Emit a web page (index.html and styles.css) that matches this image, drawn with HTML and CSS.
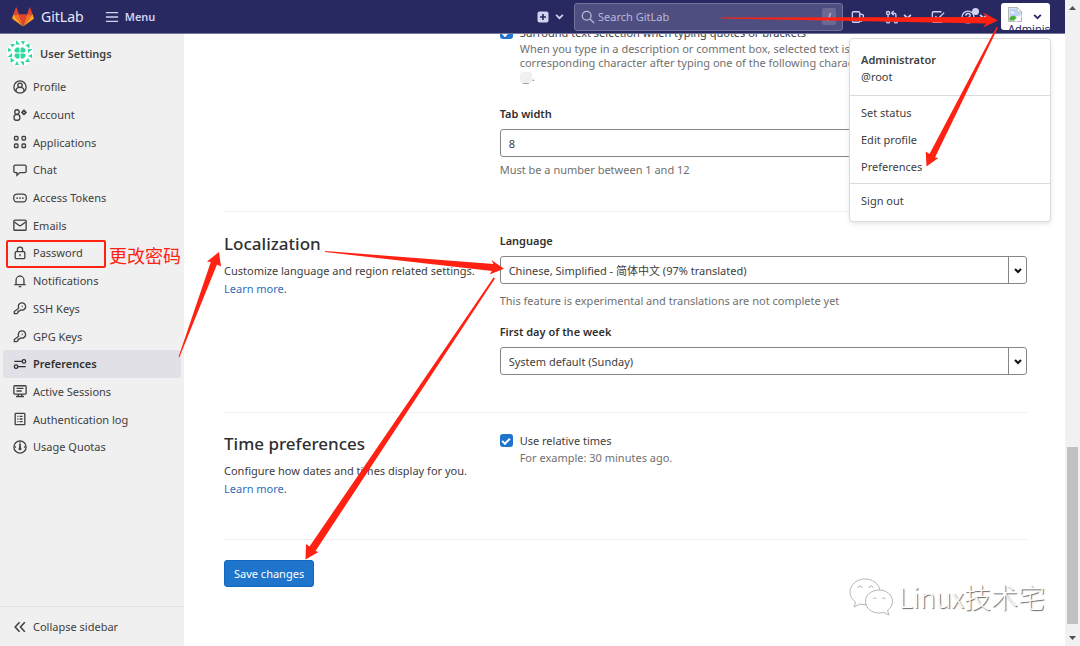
FILE: index.html
```
<!DOCTYPE html>
<html lang="en">

<head>
    <meta charset="UTF-8">
    <meta name="viewport" content="width=device-width, initial-scale=1">
    <title>Preferences · User Settings · GitLab</title>
    <link rel="stylesheet" href="styles.css">
</head>

<body>
    <div class="page">
        <header class="navbar">
            <a href="#" class="brand">
                <svg class="logo" viewBox="0 0 24 22">
                    <path fill="#e24329" d="M12 21.5 16.4 8H7.6z" />
                    <path fill="#fc6d26" d="M12 21.5 7.6 8H1.4zM12 21.5 16.4 8h6.2z" />
                    <path fill="#fca326" d="M1.4 8 .1 12.1c-.1.4 0 .8.3 1L12 21.5zM22.6 8l1.3 4.1c.1.4 0 .8-.3 1L12 21.5z" />
                    <path fill="#e24329" d="M1.4 8h6.2L4.9.7c-.1-.4-.7-.4-.8 0zM22.6 8h-6.2L19.1.7c.1-.4.7-.4.8 0z" />
                </svg>
                GitLab
            </a>
            <button type="button" class="nav-button menu-toggle">
                <svg class="icon" viewBox="0 0 16 16"><path d="M1 3h14M1 8h14M1 13h14" /></svg>
                Menu
            </button>
            <button type="button" class="nav-button new-button" aria-label="Create new">
                <svg class="icon-small" viewBox="0 0 12 12"><rect x=".5" y=".5" width="11" height="11" rx="2" fill="currentColor" stroke="none" /><path stroke="#292961" stroke-width="1.6" d="M6 3v6M3 6h6" /></svg>
                <svg class="chevron" viewBox="0 0 8 8"><path d="m1 2.5 3 3 3-3" /></svg>
            </button>
            <div class="search">
                <svg class="icon" viewBox="0 0 16 16"><circle cx="6.5" cy="6.5" r="5" /><path d="m10.5 10.5 4.5 4.5" /></svg>
                <input type="text" placeholder="Search GitLab" aria-label="Search GitLab">
                <kbd>/</kbd>
            </div>
            <nav class="nav-icons">
                <a href="#" aria-label="Issues">
                    <svg class="icon" viewBox="0 0 16 16"><rect x="1.5" y="2" width="8.5" height="12" rx="1.5" /><path d="m10 4.5 3.2.8c.8.2 1.2.9 1 1.7l-1.1 4.6c-.2.8-.9 1.2-1.7 1H10" /></svg>
                </a>
                <a href="#" class="with-chevron" aria-label="Merge requests">
                    <svg class="icon" viewBox="0 0 16 16"><circle cx="3.5" cy="3.5" r="1.8" /><circle cx="3.5" cy="13" r="1.8" /><circle cx="12.5" cy="13" r="1.8" /><path d="M3.5 5.3v5.9M12.5 11.2V6c0-1.7-1-2.5-2.5-2.5H8M10 1 7.5 3.5 10 6" /></svg>
                    <svg class="chevron" viewBox="0 0 8 8"><path d="m1 2.5 3 3 3-3" /></svg>
                </a>
                <a href="#" aria-label="To-Do List">
                    <svg class="icon" viewBox="0 0 16 16"><path d="M12 2H3a1.5 1.5 0 0 0-1.5 1.5v9A1.5 1.5 0 0 0 3 14h9a1.5 1.5 0 0 0 1.5-1.5V9M5 7l3 3 7-7" /></svg>
                </a>
                <a href="#" class="with-chevron help-link" aria-label="Help">
                    <svg class="icon" viewBox="0 0 16 16"><circle cx="8" cy="8" r="6.8" /><path d="M5.5 6.5C5.5 5 6.6 4 8 4s2.5.9 2.5 2.2C10.5 8 8 8 8 9.800M8 11v1.500" /></svg>
                    <svg class="chevron" viewBox="0 0 8 8"><path d="m1 2.500 3 3 3-3" /></svg>
                    <span class="dot"></span>
                </a>
            </nav>
            <button type="button" class="user-button">
                <span class="avatar">
                    <svg class="broken-image" viewBox="0 0 14 15">
                        <path fill="#eef3fc" stroke="#a5a5a5" stroke-width=".8" d="M.5.5H9L13.500 5v9.500H.5z" />
                        <path fill="#bdd3f8" d="M1.500 1.500H8.500V5.500h4v3L9 9l-7.500 3z" />
                        <path fill="#fff" d="M2.800 5.800c0-1.300 1.700-2 2.700-.8 1 0 1.500.6 1 1.300H3z" />
                        <path fill="#4caf3a" d="M1.500 13.500V11c2-3 5-3 7-.5L6 13.500z" />
                        <path fill="#fff" d="M6.500 14.500 13.500 8v2L9 14.500z" />
                        <path fill="#fff" stroke="#a5a5a5" stroke-width=".7" d="M9 .5V5h4.500z" />
                    </svg>
                    Administrator
                </span>
                <svg class="chevron" viewBox="0 0 8 8"><path d="m1 2.500 3 3 3-3" /></svg>
            </button>

            <div class="user-menu">
                <div class="user-info"><strong>Administrator</strong><span>@root</span></div>
                <div class="menu-group">
                    <a href="#">Set status</a>
                    <a href="#">Edit profile</a>
                    <a href="#">Preferences</a>
                </div>
                <div class="menu-group">
                    <a href="#">Sign out</a>
                </div>
            </div>
        </header>

        <div class="layout">
            <aside class="sidebar">
                <a href="#" class="context">
                    <svg class="identicon" viewBox="0 0 26 26">
                        <defs><clipPath id="round"><circle cx="13" cy="13" r="13" /></clipPath></defs>
                        <g clip-path="url(#round)">
                            <path fill="#fff" d="M0 0h26v26H0z" />
                            <path fill="#2fd8a0" d="M7.500 9.500l2-2h2.500l.5 1.500v3.500h-3.500l-1.500-1zM18.500 9.500l-2-2H14l-.5 1.500v3.500H17l1.500-1zM7.500 16.500l2 2h2.500l.5-1.500v-3.500H9l-1.500 1zM18.500 16.500l-2 2H14l-.5-1.500v-3.500H17l1.500 1zM3 4h5L5.500 7.500zM9 0l4 4.500H9zM14 1h4l-2 4zM22.500 3v5.500l-4-3zM25.500 9 21 13V9zM25 14v4l-4-2zM23 22h-5l3-4zM17 26l-4-4.500h4zM12 25H8l2-4zM3.500 23v-5.500l4 3zM.5 17 5 13v4zM1 12V8l4 2z" />
                        </g>
                    </svg>
                    User Settings
                </a>
                <ul class="side-nav">
                    <li><a href="#"><svg class="icon" viewBox="0 0 16 16"><circle cx="8" cy="8" r="7" /><circle cx="8" cy="6" r="2.500" /><path d="M3.500 13v-1c0-2 2-3.500 4.500-3.500s4.500 1.500 4.500 3.500v1" /></svg>Profile</a></li>
                    <li><a href="#"><svg class="icon" viewBox="0 0 16 16"><circle cx="4.500" cy="4.500" r="2.500" /><rect x="1.200" y="7.500" width="6.600" height="6.500" rx="2.500" /><circle cx="12.500" cy="5" r="1.700" stroke-width="2" /><path d="M12.500 1.800v1M12.500 7.200v1M9.300 5h1M14.700 5h1" /></svg>Account</a></li>
                    <li><a href="#"><svg class="icon" viewBox="0 0 16 16"><rect x="1.700" y="1.700" width="4" height="4" rx="1" /><rect x="10.300" y="1.700" width="4" height="4" rx="1" /><rect x="1.700" y="10.300" width="4" height="4" rx="1" /><rect x="10.300" y="10.300" width="4" height="4" rx="1" /></svg>Applications</a></li>
                    <li><a href="#"><svg class="icon" viewBox="0 0 16 16"><path d="M2.500 2.500h11c.8 0 1.500.7 1.500 1.500v5.500c0 .8-.7 1.500-1.500 1.500H8l-3.500 3V11h-2C1.700 11 1 10.300 1 9.500V4c0-.8.7-1.500 1.500-1.500z" /></svg>Chat</a></li>
                    <li><a href="#"><svg class="icon" viewBox="0 0 16 16"><rect x=".8" y="3.500" width="14.400" height="9" rx="4" /><path stroke-width="2" d="M4 8h1.500M7.200 8h1.500M10.500 8H12" /></svg>Access Tokens</a></li>
                    <li><a href="#"><svg class="icon" viewBox="0 0 16 16"><rect x="1" y="2.500" width="14" height="11.500" rx="1" /><path d="m1.500 4.500 5.500 4c.7.500 1.300.5 2 0l5.500-4" /></svg>Emails</a></li>
                    <li><a href="#"><svg class="icon" viewBox="0 0 16 16"><rect x="2.500" y="6.500" width="11" height="8" rx="1.200" /><path d="M5 6.500V4.200a3 3 0 0 1 6 0v2.300M8 9.200v2.600" /></svg>Password</a></li>
                    <li><a href="#"><svg class="icon" viewBox="0 0 16 16"><path d="M8 1.500v1M3.500 12V7a4.500 4.500 0 0 1 9 0v5M1.500 12.200h13M6.500 14.500h3" /></svg>Notifications</a></li>
                    <li><a href="#"><svg class="icon" viewBox="0 0 16 16"><path d="M6.500 8.200a4.200 4.200 0 1 1 2.200 2L7.200 11.500H5.800V13l-1.500 1.500H1.500V12z" /><path d="M10 6h1" stroke-width="2" /></svg>SSH Keys</a></li>
                    <li><a href="#"><svg class="icon" viewBox="0 0 16 16"><path d="M6.500 8.200a4.200 4.200 0 1 1 2.200 2L7.200 11.500H5.800V13l-1.500 1.500H1.500V12z" /><path d="M10 6h1" stroke-width="2" /></svg>GPG Keys</a></li>
                    <li><a href="#" class="active"><svg class="icon" viewBox="0 0 16 16"><circle cx="12.500" cy="5" r="2" /><circle cx="3.500" cy="11" r="2" /><path d="M1.500 5h9M5.500 11h9" /></svg>Preferences</a></li>
                    <li><a href="#"><svg class="icon" viewBox="0 0 16 16"><rect x="1" y="2" width="14" height="9.500" rx="1" /><path d="M4 5h8M4 8h6M6 11.500v2.500M10 11.500v2.500M3.500 14.300h9" /></svg>Active Sessions</a></li>
                    <li><a href="#"><svg class="icon" viewBox="0 0 16 16"><rect x="2.500" y="1.500" width="11" height="13" rx=".5" /><path d="M5 5h1.200M7.500 5H11M5 8h1.200M7.500 8H11M5 11h1.200M7.500 11H11" /></svg>Authentication log</a></li>
                    <li><a href="#"><svg class="icon" viewBox="0 0 16 16"><circle cx="8" cy="8" r="7" /><path stroke-width="2" d="M8 4v6" /><circle cx="8" cy="10" r="1" /><path d="M2 8h1.500M12.500 8H14M8 1.500V3" /></svg>Usage Quotas</a></li>
                </ul>
                <button type="button" class="collapse">
                    <svg class="icon" viewBox="0 0 16 16"><path stroke-width="1.800" d="M7.500 2.500 2.500 8l5 5.500M13.500 2.500 8.500 8l5 5.500" /></svg>
                    Collapse sidebar
                </button>
            </aside>

            <main>
                <form>
                    <section class="section scrolled">
                        <div class="fields">
                            <div class="check">
                                <input type="checkbox" id="surround" checked>
                                <label for="surround">Surround text selection when typing quotes or brackets</label>
                                <p class="help tight">When you type in a description or comment box, selected text is surrounded by the<br>corresponding character after typing one of the following characters:<br><code>_</code>.</p>
                            </div>
                            <div class="field tab-width">
                                <label for="tab-width">Tab width</label>
                                <input type="text" id="tab-width" value="8">
                                <p class="help">Must be a number between 1 and 12</p>
                            </div>
                        </div>
                    </section>

                    <section class="section localization">
                        <div class="intro">
                            <h2>Localization</h2>
                            <p>Customize language and region related settings.<br><a href="#">Learn more</a>.</p>
                        </div>
                        <div class="fields">
                            <div class="field">
                                <label for="language">Language</label>
                                <div class="select">
                                    <select id="language">
                                        <option>Chinese, Simplified - 简体中文 (97% translated)</option>
                                    </select>
                                    <svg viewBox="0 0 18 28"><path d="m6 13 3 3 3-3" /></svg>
                                </div>
                                <p class="help">This feature is experimental and translations are not complete yet</p>
                            </div>
                            <div class="field">
                                <label for="first-day">First day of the week</label>
                                <div class="select">
                                    <select id="first-day">
                                        <option>System default (Sunday)</option>
                                    </select>
                                    <svg viewBox="0 0 18 28"><path d="m6 13 3 3 3-3" /></svg>
                                </div>
                            </div>
                        </div>
                    </section>

                    <section class="section time">
                        <div class="intro">
                            <h2>Time preferences</h2>
                            <p>Configure how dates and times display for you.<br><a href="#">Learn more</a>.</p>
                        </div>
                        <div class="fields">
                            <div class="check">
                                <input type="checkbox" id="relative" checked>
                                <label for="relative">Use relative times</label>
                                <p class="help">For example: 30 minutes ago.</p>
                            </div>
                        </div>
                    </section>

                    <button type="submit" class="save">Save changes</button>
                </form>
            </main>
        </div>
    </div>

    <div class="scrollbar" aria-hidden="true">
        <svg viewBox="0 0 15 16"><path d="M4 10h7L7.500 6z" /></svg>
        <div class="thumb"></div>
        <svg viewBox="0 0 15 16"><path d="M4 6h7l-3.500 4z" /></svg>
    </div>

    <!-- tutorial marks drawn over the page -->
    <svg class="annotations" width="1080" height="646" viewBox="0 0 1080 646">
        <path d="M721 17.500 986 17 983 12.500 998 20.500 983 27.500 986 23.500 721 18.500z" />
        <path d="M996.500 27 929.500 154 925.700 151.500 926.500 166.500 938.300 158 935 157.500 998 27.500z" />
        <path d="M178.500 357 210.800 262 207 261.500 219 252 221 266.500 217 264.500 179.500 357z" />
        <path d="M325 251 493.500 264 491.500 260 504 268.700 489.500 274.500 492 271 325 252z" />
        <path d="M493.500 277.500 309.500 546.500 306 544 305.500 559.500 318.500 552 315.500 551 495 278.500z" />
        <rect x="7" y="241" width="98" height="26" rx="1" />
        <text x="109" y="263">更改密码</text>
    </svg>

    <div class="watermark">
        <svg viewBox="0 0 44 38">
            <path d="M16 1C7.500 1 1 7 1 14c0 4 2 7.500 5.500 10L5 29l6-3c2 .6 4 .8 6 .700" />
            <path d="M30 12c-7.500 0-13.500 5-13.500 11.500S22.500 35 30 35c1.500 0 3-.2 4.500-.7L40 37l-1.500-4.500c3-2 5-5.500 5-9C43.500 17 37.500 12 30 12zM31 12C29.500 5.500 23.500 1 16 1" />
            <path d="M9 10a2 2 0 0 1 4 0M20 10a2 2 0 0 1 4 0M24 21a2 2 0 0 1 3.500 0M33 21a2 2 0 0 1 3.500 0" />
        </svg>
        Linux技术宅
    </div>
</body>

</html>
```

FILE: styles.css
```
:root {
    --indigo: #292961;
    --indigo-text: #d1d1f0;
    --text: #404040;
    --text-strong: #303030;
    --text-muted: #707070;
    --border: #868686;
    --line: #eee;
    --blue: #1f75cb;
    --link: #2f6fbf;
    --mark: #ff2213;
    --font: "Noto Sans", "Noto Sans CJK SC", sans-serif;
}

* {
    box-sizing: border-box;
}

body {
    margin: 0;
    height: 100vh;
    display: flex;
    overflow: hidden;
    background: #fff;
    color: var(--text);
    font: 11px/17px var(--font);
}

a {
    color: inherit;
    text-decoration: none;
}

p,
h2,
ul {
    margin: 0;
    padding: 0;
}

button,
input,
select {
    font: inherit;
    color: inherit;
}

svg {
    flex: none;
    fill: none;
    stroke: currentColor;
}

.icon {
    width: 14px;
    height: 14px;
    stroke-width: 1.5;
}

.icon-small {
    width: 12px;
    height: 12px;
}

.chevron {
    width: 9px;
    height: 9px;
    stroke-width: 1.5;
}

.page {
    flex: 1;
    min-width: 0;
    display: flex;
    flex-direction: column;
}

/* Top bar */
.navbar {
    position: relative;
    z-index: 2;
    flex: none;
    height: 34px;
    padding: 0 15px 0 12px;
    display: flex;
    align-items: center;
    background: var(--indigo);
    border-bottom: 1px solid #77779c;
    color: var(--indigo-text);
}

.brand {
    display: flex;
    align-items: center;
    gap: 7px;
    font-size: 14px;
    color: #e8e8f7;
}

.logo {
    width: 22px;
    height: 20px;
    stroke: none;
}

.nav-button {
    display: flex;
    align-items: center;
    gap: 6px;
    padding: 0;
    border: 0;
    background: none;
}

.menu-toggle {
    margin-left: 21px;
    font-weight: 600;
}

.new-button {
    margin-left: auto;
    margin-right: 10px;
}

.search {
    flex: 0 1 269px;
    height: 28px;
    display: flex;
    align-items: center;
    gap: 3px;
    padding: 0 6px;
    background: #4f4e80;
    border: 1px solid #74739b;
    border-radius: 3px;
}

.search .icon {
    color: #b9b9d9;
}

.search input {
    flex: 1;
    min-width: 0;
    padding: 0;
    border: 0;
    background: none;
}

.search input::placeholder {
    color: #b9b9d9;
    opacity: 1;
}

.search kbd {
    width: 14px;
    border-radius: 2px;
    background: #696994;
    font: inherit;
    text-align: center;
}

.nav-icons {
    display: flex;
    gap: 20px;
    margin: 0 13px 0 8px;
}

.nav-icons a {
    display: flex;
    align-items: center;
}

.with-chevron {
    position: relative;
    gap: 4px;
}

.with-chevron + a {
    margin-left: -1px;
}

.help-link {
    margin-left: -4px;
}

.dot {
    position: absolute;
    top: -2px;
    left: 11px;
    width: 7px;
    height: 7px;
    border-radius: 50%;
    background: var(--indigo-text);
}

.user-button {
    width: 49px;
    height: 27px;
    display: flex;
    align-items: flex-start;
    gap: 5px;
    padding: 4px 7px 0;
    overflow: hidden;
    border: 0;
    border-radius: 3px;
    background: #fff;
    color: var(--indigo);
}

.user-button .chevron {
    margin-top: 5px;
}

.avatar {
    flex: none;
    width: 20px;
    line-height: 12px;
    text-align: left;
}

.broken-image {
    display: block;
    width: 14px;
    height: 15px;
    margin-bottom: 1px;
    stroke: none;
}

.user-menu {
    position: absolute;
    top: 38px;
    right: 14px;
    width: 202px;
    padding-bottom: 4px;
    border: 1px solid #dbdbdb;
    border-radius: 4px;
    background: #fff;
    color: var(--text);
    box-shadow: 0 2px 4px rgba(0, 0, 0, 0.1);
}

.user-info {
    display: flex;
    flex-direction: column;
    padding: 12px 11px 10px;
}

.user-info strong {
    font-weight: 600;
}

.menu-group {
    padding: 3px 0;
    border-top: 1px solid #dbdbdb;
}

.menu-group a {
    display: block;
    padding: 5px 11px;
}

.layout {
    flex: 1;
    min-height: 0;
    display: flex;
}

/* Sidebar */
.sidebar {
    flex: none;
    width: 184px;
    display: flex;
    flex-direction: column;
    background: #f0f0f0;
}

.context {
    display: flex;
    align-items: center;
    gap: 7px;
    padding: 6px 7px 7px;
    font-weight: 600;
}

.identicon {
    width: 26px;
    height: 26px;
    stroke: none;
}

.side-nav {
    height: 60vh;
    min-height: 336px;
    display: grid;
    grid-auto-rows: 1fr;
    list-style: none;
    padding: 0 3px;
}

.side-nav a {
    height: 100%;
    display: flex;
    align-items: center;
    gap: 6px;
    padding: 0 10px;
    border-radius: 3px;
}

.side-nav .active {
    background: #e1e0e6;
    color: var(--text-strong);
    font-weight: 600;
}

.collapse {
    margin-top: auto;
    height: 40px;
    display: flex;
    align-items: center;
    gap: 6px;
    padding: 0 13px;
    border: 0;
    border-top: 1px solid #e0e0e0;
    background: none;
}

/* Settings form */
main {
    flex: 1;
    min-width: 0;
    padding: 0 38px 0 40px;
}

.section {
    display: grid;
    grid-template-columns: repeat(12, 1fr);
    column-gap: 24px;
    border-bottom: 1px solid var(--line);
}

.intro {
    grid-column: span 4;
}

.fields {
    grid-column: 5 / -1;
}

/* the list is scrolled, its first row lies partly under the top bar */
.scrolled {
    margin-top: -10px;
    padding-bottom: 33px;
}

.localization {
    padding: 20px 0 37px;
}

.time {
    padding: 19px 0 41px;
    margin-bottom: 20px;
}

h2 {
    font-size: 17px;
    line-height: 24px;
    font-weight: 500;
    margin-bottom: 6px;
    color: var(--text-strong);
}

.intro p {
    line-height: 18px;
    white-space: nowrap;
}

.intro a {
    color: var(--link);
}

.help {
    margin-top: 8px;
    color: var(--text-muted);
}

.field {
    margin-bottom: 14px;
}

.field:last-child {
    margin-bottom: 0;
}

.field label {
    display: block;
    margin-bottom: 7px;
    color: var(--text-strong);
    font-weight: 600;
}

.field input,
.field select {
    display: block;
    width: 100%;
    height: 28px;
    padding: 0 8px;
    border: 1px solid var(--border);
    border-radius: 3px;
    background: #fff;
    appearance: none;
}

.tab-width {
    margin-top: 20px;
}

.tab-width .help {
    margin-top: 4px;
}

.select {
    position: relative;
}

.select svg {
    position: absolute;
    top: 0;
    right: 0;
    width: 19px;
    height: 28px;
    border-left: 1px solid var(--border);
    stroke: #111;
    stroke-width: 2;
    pointer-events: none;
}

.check {
    display: grid;
    grid-template-columns: 13px 1fr;
    column-gap: 7px;
    align-items: center;
}

.check input {
    appearance: none;
    width: 13px;
    height: 13px;
    margin: 0;
    display: grid;
    place-items: center;
    border-radius: 3px;
    background: var(--blue);
}

.check input:checked::after {
    content: "";
    width: 6px;
    height: 3px;
    border: solid #fff;
    border-width: 0 0 2px 2px;
    transform: rotate(-45deg);
}

.check .help {
    grid-column: 2;
    margin-top: 0;
}

.check .tight {
    margin-top: 1px;
    line-height: 14px;
}

code {
    padding: 0 3px;
    border-radius: 3px;
    background: #f0f0f0;
    color: #1f1f1f;
    font: 10px/14px "DejaVu Sans Mono", monospace;
}

.save {
    height: 27px;
    padding: 0 9px;
    border: 1px solid #1068bf;
    border-radius: 3px;
    background: var(--blue);
    color: #fff;
}

/* Window scrollbar */
.scrollbar {
    flex: none;
    width: 15px;
    display: flex;
    flex-direction: column;
    background: #f1f1f1;
}

.scrollbar svg {
    height: 16px;
    fill: #505050;
    stroke: none;
}

.thumb {
    height: 177px;
    margin: auto 2px 6px;
    background: #c1c1c1;
}

/* Overlays */
.annotations {
    position: absolute;
    top: 0;
    left: 0;
    z-index: 3;
    fill: var(--mark);
    stroke: none;
    pointer-events: none;
}

.annotations rect {
    fill: none;
    stroke: var(--mark);
    stroke-width: 2;
}

.annotations text {
    font: 18px "Noto Sans CJK SC", sans-serif;
}

.watermark {
    position: absolute;
    right: 35px;
    bottom: 29px;
    display: flex;
    align-items: center;
    gap: 6px;
    color: #fff;
    font: 300 27px/40px "Noto Sans CJK SC", sans-serif;
    text-shadow: 1px 1px 1px #666;
}

.watermark svg {
    width: 44px;
    height: 38px;
    fill: #fff;
    stroke: #b5b5b5;
}
```
